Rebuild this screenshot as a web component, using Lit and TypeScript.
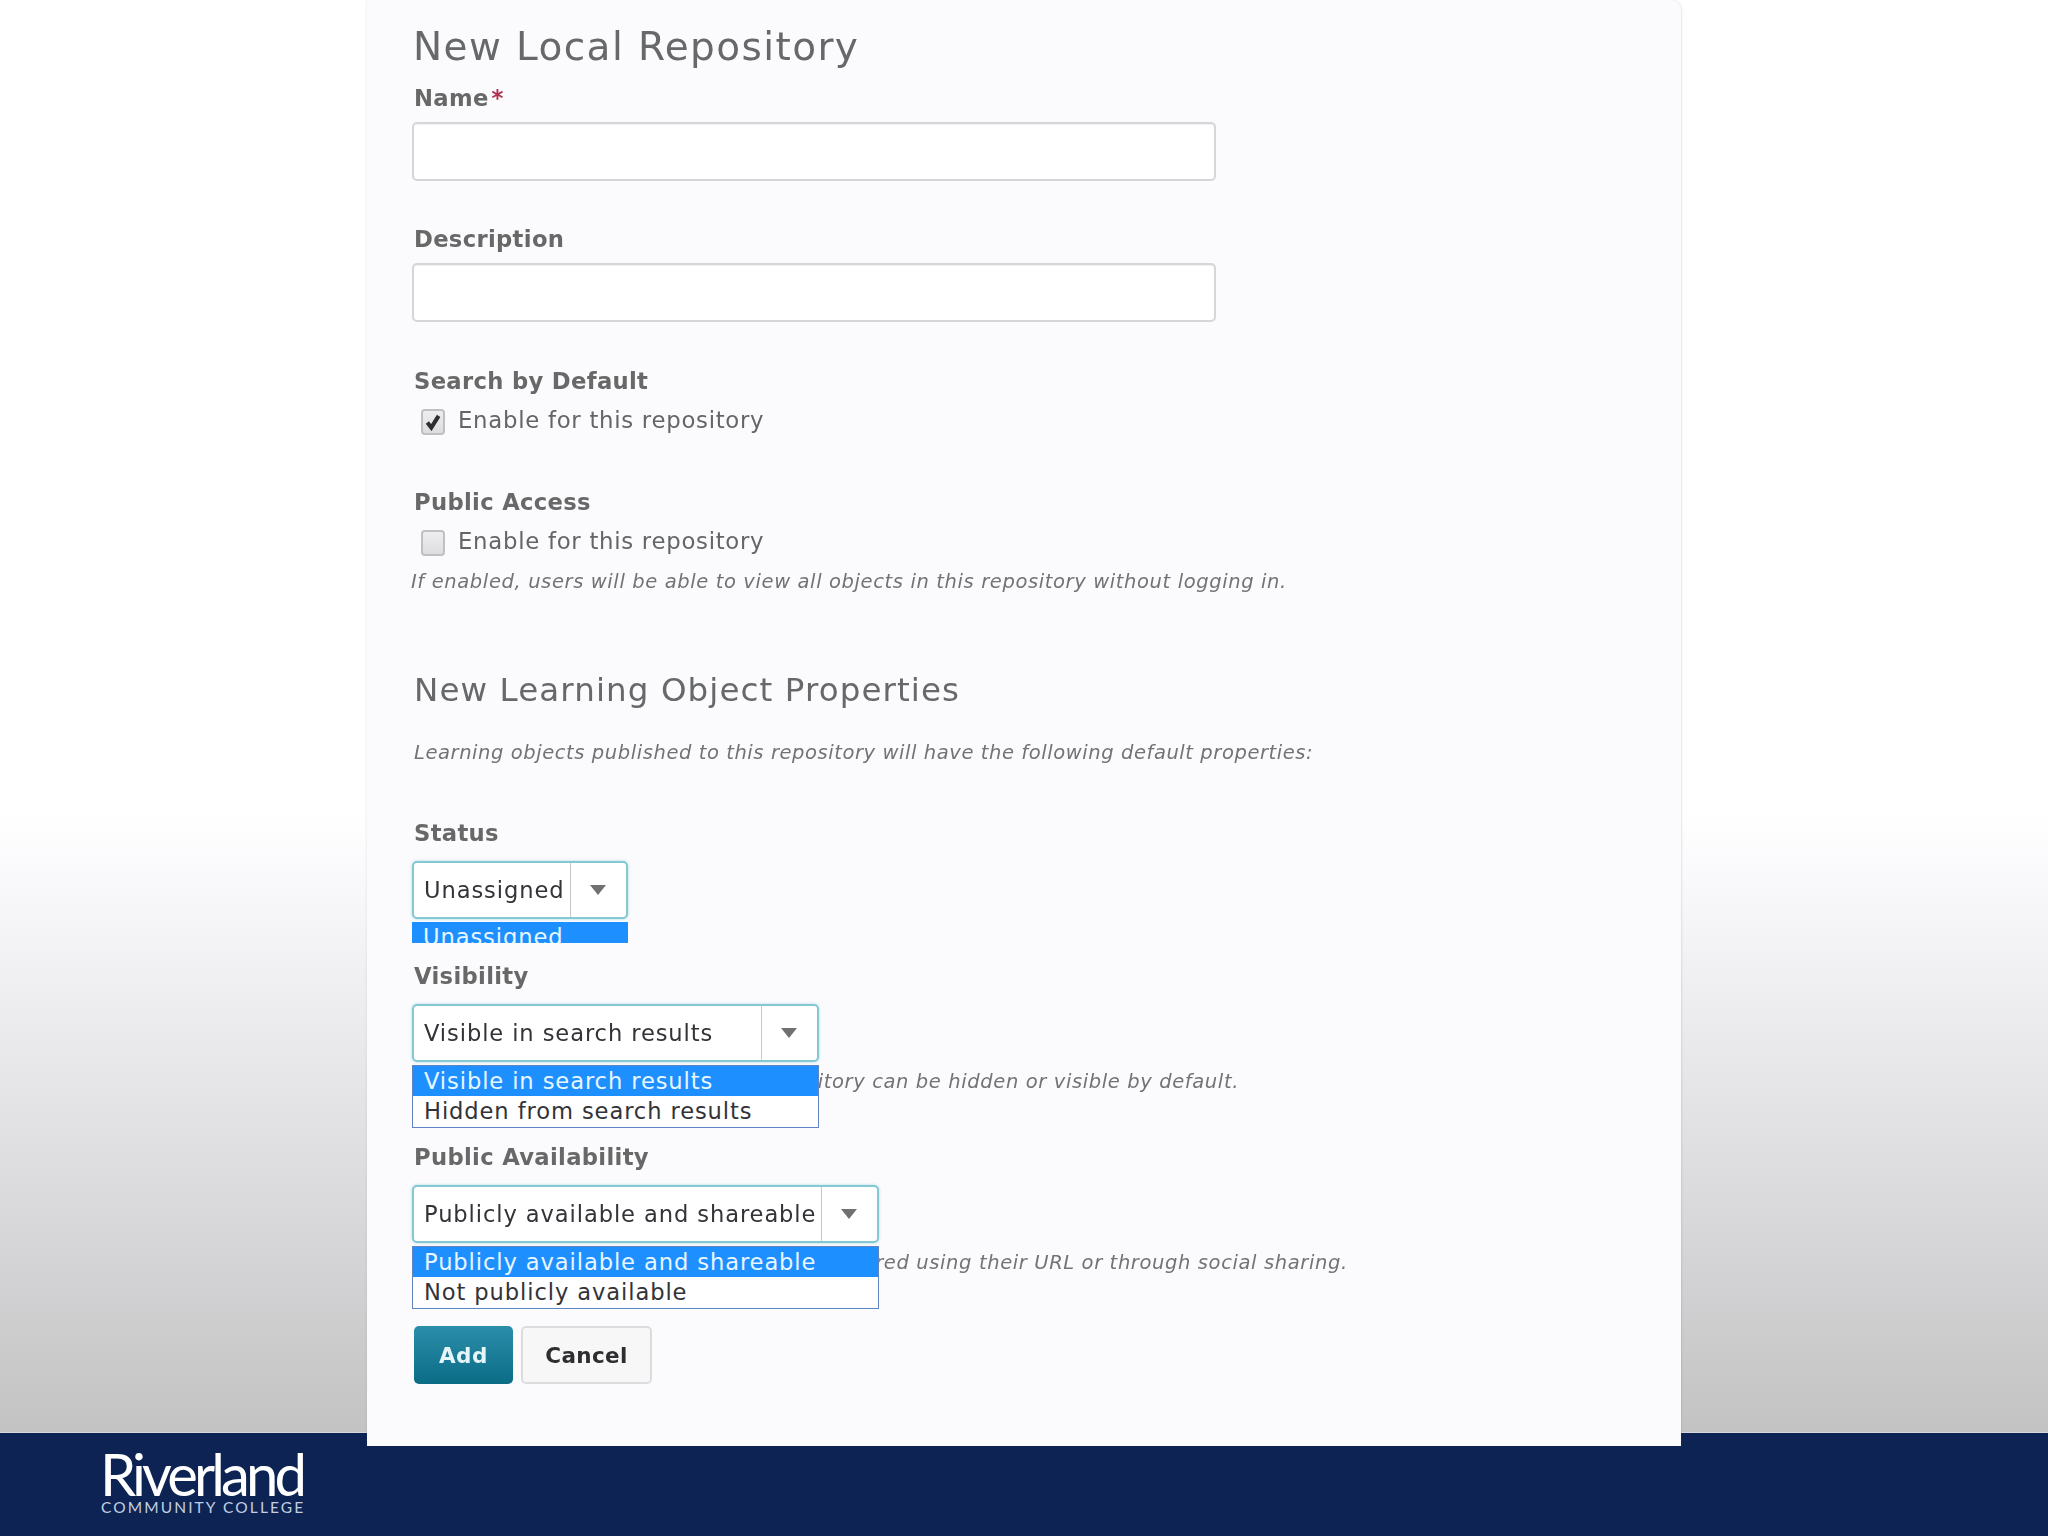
import { LitElement, html, css } from "lit";
import { customElement } from "lit/decorators.js";

const arrow = html`<svg class="arrow" viewBox="0 0 16 10" width="16" height="10"><path d="M0 0H16L8 10Z" fill="#6f7173"/></svg>`;

@customElement("app-root")
export class AppRoot extends LitElement {
  static styles = css`
    :host { display: block; width: 2048px; height: 1536px; overflow: hidden; font-family: "DejaVu Sans", Verdana, sans-serif; }
    .stage { height: 1433px; background: linear-gradient(#fff 0, #fff 815px, #fbfafc 860px, #e6e5e7 1080px, #d3d2d4 1270px, #c3c3c3 1433px); border-bottom: 1px solid #d8d8dc; box-sizing: border-box; }
    .panel { width: 1314px; height: 1446px; margin-left: 367px; box-sizing: border-box; padding: 27px 0 0 45px; background: #fbfafc; box-shadow: -1px 0 2px rgba(90,90,90,.08), 1px 0 2px rgba(90,90,90,.14); border-radius: 0 10px 0 0; position: relative; z-index: 1; color: #6b6d6f; filter: blur(.45px); }
    h1, h2 { margin: 0; font-weight: 400; color: #66686a; line-height: 40px; }
    h1 { margin-left: 1px; font-size: 39px; letter-spacing: 1.4px; }
    h2 { margin: 76px 0 0 2px; font-size: 32.5px; letter-spacing: 1.1px; }
    .label { display: block; margin-left: 2px; font-weight: 700; font-size: 22.7px; line-height: 26px; color: #686868; letter-spacing: .32px; }
    .req { color: #b03050; margin-left: 3px; }
    .input { width: 804px; height: 59px; box-sizing: border-box; background: #fff; border: 2px solid #d6d6d8; border-radius: 5px; margin-top: 11px; box-shadow: inset 0 1px 1px rgba(0,0,0,.06); }
    .m18 { margin-top: 18px; } .m45 { margin-top: 45px; } .m46 { margin-top: 46px; } .m55 { margin-top: 55px; } .m44 { margin-top: 44px; } .m50 { margin-top: 50px; }
    .check { display: flex; align-items: center; height: 28px; margin: 12px 0 0 9px; font-size: 22.8px; letter-spacing: .72px; color: #636567; }
    .box { width: 24px; height: 26px; box-sizing: border-box; border: 2px solid #c0c0c2; border-radius: 4px; background: linear-gradient(#eeeef0, #dddddf); margin-right: 13px; display: flex; align-items: center; justify-content: center; margin-top: 4px; }
    .hint { font-style: italic; font-size: 19.5px; line-height: 24px; letter-spacing: .62px; color: #717375; white-space: nowrap; }
    .hint.first { margin-top: 15px; margin-left: -1px; }
    .hint.intro { margin: 31px 0 0 2px; letter-spacing: .58px; }
    .hint.under { margin-top: 8px; }
    .hint.vis { margin-left: 13px; }
    .hint.pub { margin-left: 40px; }
    .field { position: relative; }
    .select { display: flex; height: 58px; box-sizing: border-box; background: #fff; border: 2px solid #84c8d4; border-radius: 5px; box-shadow: 0 0 3px #a8dbe3; font-size: 22.6px; letter-spacing: .9px; color: #333338; margin-top: 15px; white-space: nowrap; }
    .value { flex: 1; min-width: 0; display: flex; align-items: center; padding-left: 10px; overflow: hidden; border-right: 1px solid #c8c8ca; }
    .caret { width: 55px; flex: none; display: flex; align-items: center; justify-content: center; padding-right: 2px; box-sizing: border-box; }
    .list { position: absolute; left: 0; right: 0; top: 61px; box-sizing: border-box; border: 1.5px solid #5f84bf; padding-bottom: 1px; background: #fff; font-size: 22.6px; letter-spacing: .9px; color: #333338; white-space: nowrap; }
    .list.clipped { height: 21px; overflow: hidden; border: 0; padding: 0; background: #1e8fff; }
    .opt { height: 30px; line-height: 30px; padding-left: 11px; }
    .opt.on { background: #1e8fff; color: #e8f6ff; }
    .actions { display: flex; gap: 8px; margin: 51px 0 0 2px; }
    .btn { height: 58px; display: flex; align-items: center; justify-content: center; box-sizing: border-box; border-radius: 5px; font-weight: 700; font-size: 21.5px; }
    .add { width: 99px; background: linear-gradient(#2b8eaa, #0b6c86); color: #e6f6f8; letter-spacing: .6px; }
    .cancel { width: 131px; background: #f8f7f8; border: 2px solid #dcdcde; color: #2e2e30; letter-spacing: .35px; }
    .footer { height: 103px; background: #0c2354; box-sizing: border-box; padding: 16px 0 0 101px; color: #fff; }
    .brand { font-family: "Lato", sans-serif; font-size: 58px; line-height: 50px; letter-spacing: -3.9px; font-weight: 400; margin-left: -1px; }
    .sub { font-family: "Lato", sans-serif; font-size: 15.5px; line-height: 15px; letter-spacing: 2.1px; color: #c3cfe0; margin-top: 1px; }
  `;

  private field(opts: string[], selected: string, width: number, clipped = false) {
    return html`
      <div class="field" style="width:${width}px">
        <div class="select">
          <span class="value">${selected}</span>
          <span class="caret">${arrow}</span>
        </div>
        <div class="list ${clipped ? "clipped" : ""}">
          ${opts.map((o) => html`<div class="opt ${o === selected ? "on" : ""}">${o}</div>`)}
        </div>
      </div>`;
  }

  render() {
    return html`
      <div class="stage">
        <div class="panel">
          <h1>New Local Repository</h1>
          <label class="label m18">Name<span class="req">*</span></label>
          <div class="input"></div>
          <label class="label m45">Description</label>
          <div class="input"></div>
          <label class="label m46">Search by Default</label>
          <div class="check">
            <span class="box"><svg viewBox="0 0 16 16" width="18" height="18"><path d="M3 8.5 6.5 13 13 2.5" fill="none" stroke="#2e2e2e" stroke-width="3.6"/></svg></span>Enable for this repository
          </div>
          <label class="label m55">Public Access</label>
          <div class="check"><span class="box"></span>Enable for this repository</div>
          <div class="hint first">If enabled, users will be able to view all objects in this repository without logging in.</div>
          <h2>New Learning Object Properties</h2>
          <div class="hint intro">Learning objects published to this repository will have the following default properties:</div>
          <label class="label m55">Status</label>
          ${this.field(["Unassigned"], "Unassigned", 216, true)}
          <label class="label m44">Visibility</label>
          ${this.field(["Visible in search results", "Hidden from search results"], "Visible in search results", 407)}
          <div class="hint under vis">Learning objects created in this repository can be hidden or visible by default.</div>
          <label class="label m50">Public Availability</label>
          ${this.field(["Publicly available and shareable", "Not publicly available"], "Publicly available and shareable", 467)}
          <div class="hint under pub">Publicly available objects can be discovered using their URL or through social sharing.</div>
          <div class="actions">
            <div class="btn add">Add</div>
            <div class="btn cancel">Cancel</div>
          </div>
        </div>
      </div>
      <div class="footer">
        <div class="brand">Riverland</div>
        <div class="sub">COMMUNITY COLLEGE</div>
      </div>
    `;
  }
}
